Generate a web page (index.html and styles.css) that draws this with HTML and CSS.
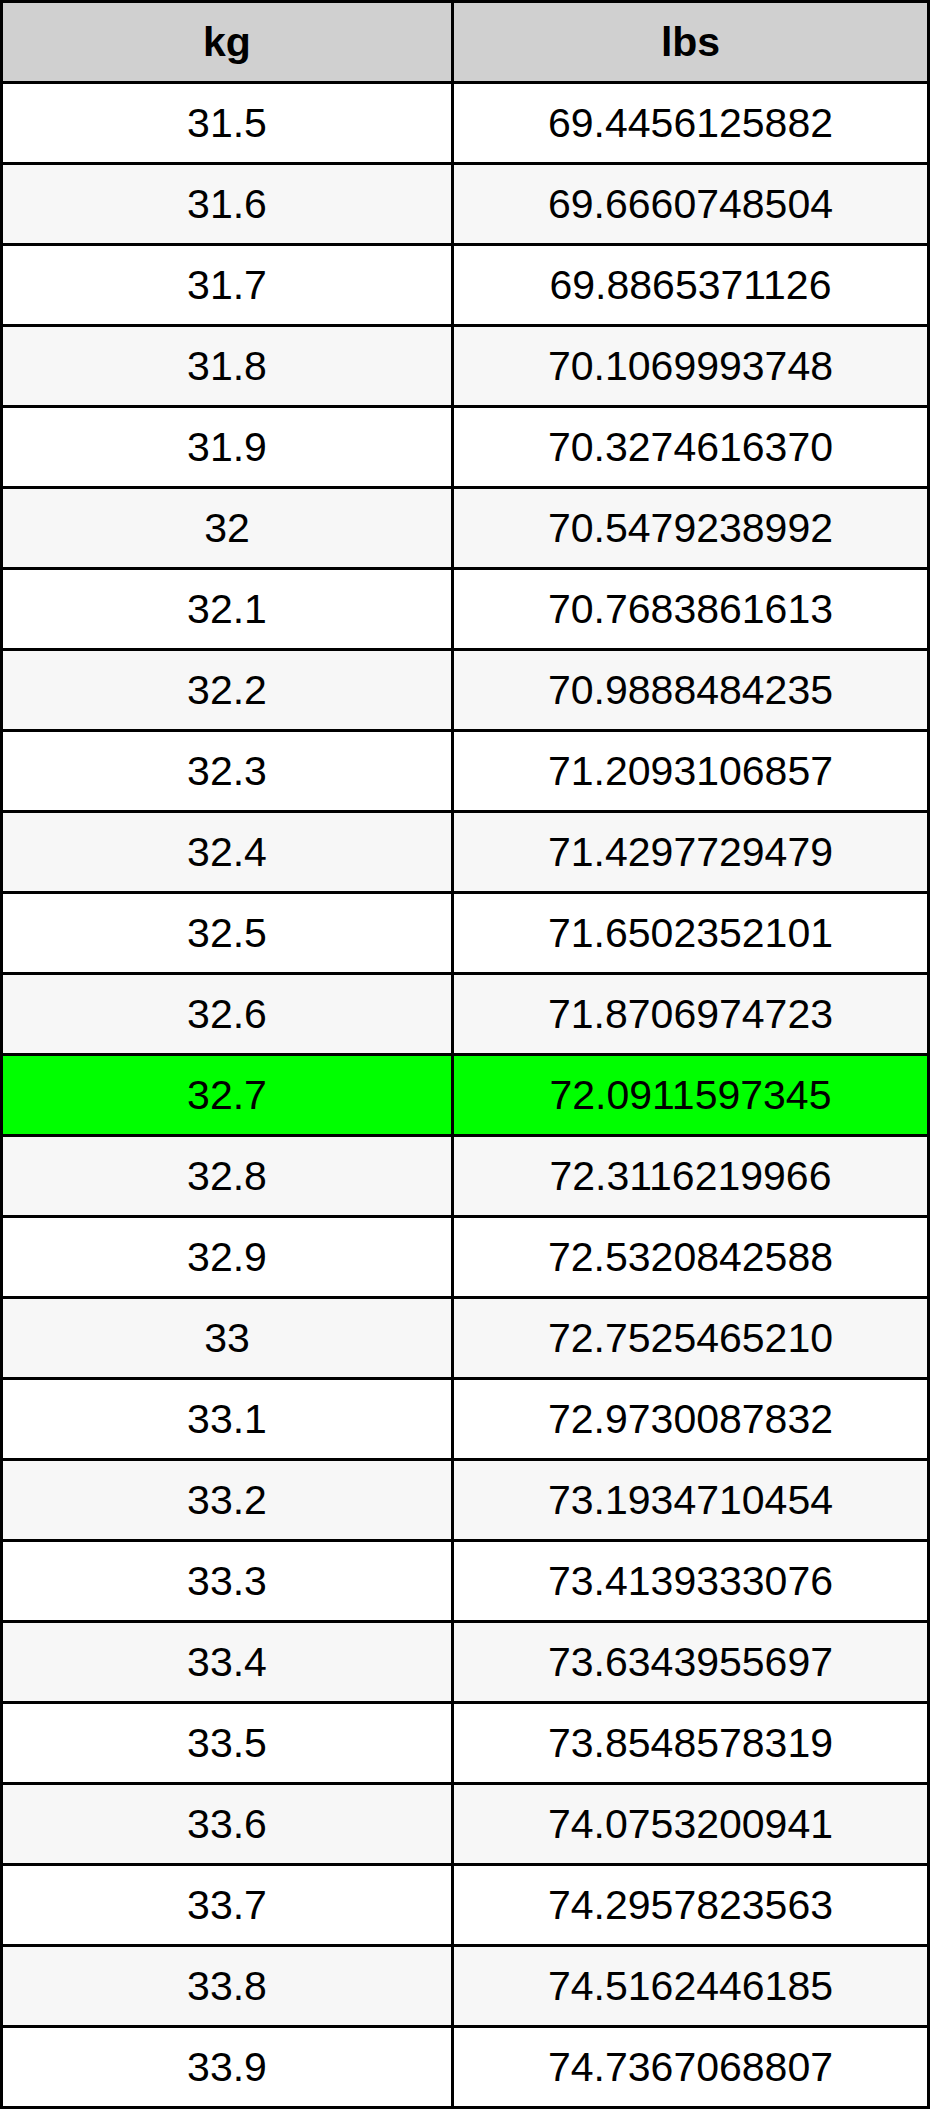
FILE: index.html
```html
<!DOCTYPE html>
<html lang="en">
<head>
<meta charset="utf-8">
<title>kg to lbs</title>
<link rel="stylesheet" href="styles.css">
</head>
<body>
<table class="conv">
  <colgroup><col class="c-kg"><col class="c-lbs"></colgroup>
  <thead>
    <tr><th>kg</th><th>lbs</th></tr>
  </thead>
  <tbody>
    <tr><td>31.5</td><td>69.4456125882</td></tr>
    <tr><td>31.6</td><td>69.6660748504</td></tr>
    <tr><td>31.7</td><td>69.8865371126</td></tr>
    <tr><td>31.8</td><td>70.1069993748</td></tr>
    <tr><td>31.9</td><td>70.3274616370</td></tr>
    <tr><td>32</td><td>70.5479238992</td></tr>
    <tr><td>32.1</td><td>70.7683861613</td></tr>
    <tr><td>32.2</td><td>70.9888484235</td></tr>
    <tr><td>32.3</td><td>71.2093106857</td></tr>
    <tr><td>32.4</td><td>71.4297729479</td></tr>
    <tr><td>32.5</td><td>71.6502352101</td></tr>
    <tr><td>32.6</td><td>71.8706974723</td></tr>
    <tr class="hl"><td>32.7</td><td>72.0911597345</td></tr>
    <tr><td>32.8</td><td>72.3116219966</td></tr>
    <tr><td>32.9</td><td>72.5320842588</td></tr>
    <tr><td>33</td><td>72.7525465210</td></tr>
    <tr><td>33.1</td><td>72.9730087832</td></tr>
    <tr><td>33.2</td><td>73.1934710454</td></tr>
    <tr><td>33.3</td><td>73.4139333076</td></tr>
    <tr><td>33.4</td><td>73.6343955697</td></tr>
    <tr><td>33.5</td><td>73.8548578319</td></tr>
    <tr><td>33.6</td><td>74.0753200941</td></tr>
    <tr><td>33.7</td><td>74.2957823563</td></tr>
    <tr><td>33.8</td><td>74.5162446185</td></tr>
    <tr><td>33.9</td><td>74.7367068807</td></tr>
  </tbody>
</table>
</body>
</html>
```
FILE: styles.css
```css
html, body {
  margin: 0;
  padding: 0;
  background: #ffffff;
}

.conv {
  width: 930px;
  table-layout: fixed;
  border-collapse: separate;
  border-spacing: 0;
  border-top: 3px solid #000;
  border-left: 3px solid #000;
  font-family: "Liberation Sans", Arial, sans-serif;
  font-size: 41px;
  color: #000;
}

.c-kg { width: 451px; }
.c-lbs { width: 476px; }

.conv tr { height: 81px; }

.conv th,
.conv td {
  box-sizing: border-box;
  padding: 0;
  border-right: 3px solid #000;
  border-bottom: 3px solid #000;
  text-align: center;
  vertical-align: middle;
  line-height: 1;
}

.conv th {
  background: #d0d0d0;
  font-weight: bold;
}

.conv tbody tr:nth-child(even) td {
  background: #f7f7f7;
}

.conv tbody tr.hl td {
  background: #00ff00;
}
```
